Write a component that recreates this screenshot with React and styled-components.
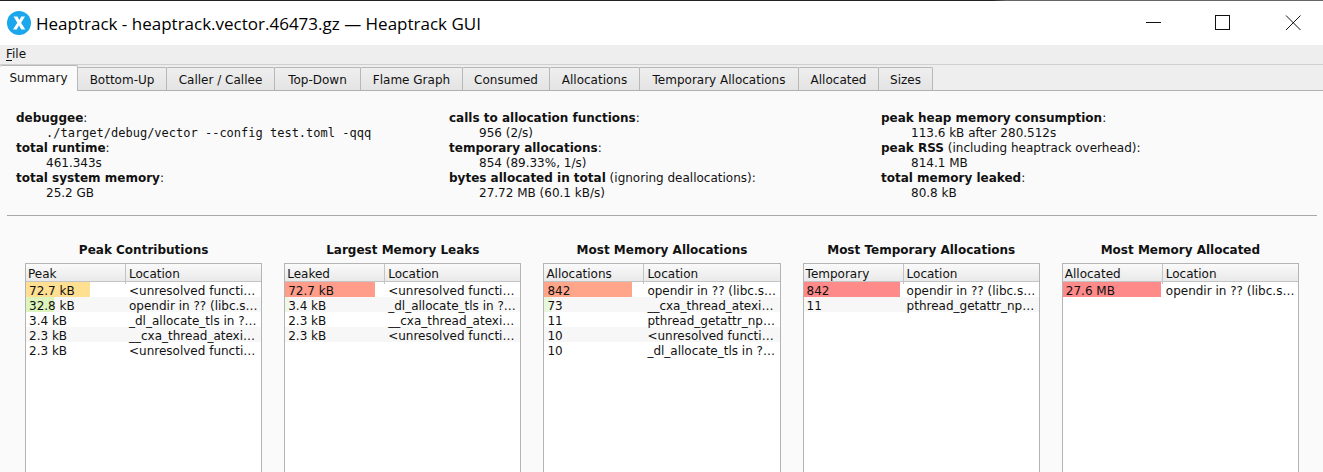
import React from "react";
import styled, { createGlobalStyle } from "styled-components";

const Global = createGlobalStyle`
  html, body { margin: 0; padding: 0; background: #fafafa; }
  body { font-family: "DejaVu Sans", sans-serif; font-size: 12px; color: #111; }
`;
const Win = styled.div`
  width: 1323px; height: 472px; overflow: hidden; display: flex; flex-direction: column;
  border-top: 1px solid #222; border-image: linear-gradient(90deg, #222 75%, #666 76%) 1; box-sizing: border-box; background: #fafafa;
`;
const TitleBar = styled.div`
  height: 44px; flex: none; background: #fff; display: flex; align-items: center; padding-left: 7px;
`;
const TitleText = styled.div`
  font-family: "Open Sans", "Noto Sans", sans-serif; font-size: 17px; color: #000; margin-left: 5px; white-space: nowrap; flex: 1;
`;
const WinButtons = styled.div`display: flex; align-items: center; margin-right: -5px;`;
const WinBtn = styled.div`width: 70px; height: 44px; display: flex; align-items: center; justify-content: center;
  svg { display: block; }
`;
const MenuBar = styled.div`
  height: 19px; flex: none; background: #eeeeee; padding-left: 6px; display: flex; align-items: center; line-height: 21px;
`;
const MenuItem = styled.div`
  u { text-underline-offset: 2px; }
`;
const TabBar = styled.div`
  height: 27px; flex: none; background: #eeeeee; border-top: 1px solid #cfcfcf; border-bottom: 1px solid #b0b0b0; box-sizing: border-box;
  display: flex; align-items: flex-end; position: relative;
`;
const Tab = styled.div`
  width: ${p => p.$w}px; box-sizing: border-box; text-align: center; white-space: nowrap; flex: none;
  height: ${p => p.$active ? 26 : 23}px;
  line-height: ${p => p.$active ? 25 : 24}px;
  background: ${p => p.$active ? "#fafafa" : "linear-gradient(#efefef, #e4e4e4)"};
  border: 1px solid #b8b8b8; border-bottom: none; border-left: ${p => p.$first ? "none" : "1px solid #b8b8b8"};
  margin-left: ${p => p.$first ? 0 : -1}px;
  border-radius: 2px 2px 0 0;
  margin-bottom: ${p => p.$active ? -1 : 0}px;
  position: relative; z-index: ${p => p.$active ? 1 : 0};
`;
const Summary = styled.div`
  display: grid; grid-template-columns: 433px 432px 1fr; padding: 20px 0 0 16px; line-height: 15px; height: 124px; box-sizing: border-box; flex: none;
`;
const InfoCol = styled.div``;
const Label = styled.div`b { font-weight: 700; }`;
const Value = styled.div`
  padding-left: 30px; white-space: nowrap;
  font-family: ${p => p.$mono ? '"DejaVu Sans Mono", monospace' : "inherit"};
`;
const Sep = styled.div`height: 1px; background: #a8a8a8; margin: 0 6px 0 7px; flex: none;`;
const Panels = styled.div`
  display: grid; grid-template-columns: repeat(5, 1fr); gap: 22px; padding: 27px 24px 0 25px; flex: 1; min-height: 0;
`;
const Panel = styled.div`display: flex; flex-direction: column; min-width: 0; height: 300px;`;
const PanelTitle = styled.div`font-weight: 700; text-align: center; line-height: 15px; height: 15px; margin-bottom: 5px; white-space: nowrap;`;
const TableBox = styled.div`border: 1px solid #b4b4b4; background: #fff; flex: 1;`;
const Head = styled.div`
  display: grid; grid-template-columns: 99px 1fr; height: 18px; line-height: 20px;
  background: linear-gradient(#fafafa, #e9e9e9); border-bottom: 1px solid #c4c4c4; box-sizing: border-box;
`;
const HeadCell = styled.div`
  padding-left: ${p => p.$second ? 3 : 2}px; border-left: ${p => p.$second ? "1px solid #c4c4c4" : "none"};
`;
const Row = styled.div`
  display: grid; grid-template-columns: 100px 1fr; height: 15px; line-height: 19px;
  background: ${p => p.$alt ? "#f7f7f7" : "#fff"};
`;
const ValueCell = styled.div`position: relative; padding-left: 3px; white-space: nowrap; height: 15px;`;
const Bar = styled.div`position: absolute; left: 0; top: 0; bottom: 0; background: ${p => p.$c};`;
const CellText = styled.span`position: relative;`;
const LocCell = styled.div`padding-left: 3px; white-space: nowrap; height: 15px;`;

const Logo = () => (
  <svg width="24" height="24" viewBox="0 0 24 24">
    <circle cx="12" cy="12" r="12" fill="#1aa7ec" />
    <path d="M6.5 5.5h4l1.8 3.6 2-3.6h3.7l-3.9 6.2 4.2 6.8h-4l-2.3-4-2.3 4H6l4.3-6.8z" fill="#fff" />
  </svg>
);

const tabs = [
  ["Summary", 78], ["Bottom-Up", 90], ["Caller / Callee", 109], ["Top-Down", 87], ["Flame Graph", 103],
  ["Consumed", 88], ["Allocations", 91], ["Temporary Allocations", 160], ["Allocated", 81], ["Sizes", 55],
];

const panels = [
  { title: "Peak Contributions", head: "Peak", rows: [
    ["72.7 kB", "<unresolved functi…", 64, "#ffdf91"], ["32.8 kB", "opendir in ?? (libc.s…", 28, "#ddf5bc"],
    ["3.4 kB", "_dl_allocate_tls in ?…", 0], ["2.3 kB", "__cxa_thread_atexi…", 0], ["2.3 kB", "<unresolved functi…", 0] ] },
  { title: "Largest Memory Leaks", head: "Leaked", rows: [
    ["72.7 kB", "<unresolved functi…", 90, "#ff9d8a"], ["3.4 kB", "_dl_allocate_tls in ?…", 4, "#eef8e6"],
    ["2.3 kB", "__cxa_thread_atexi…", 0], ["2.3 kB", "<unresolved functi…", 0] ] },
  { title: "Most Memory Allocations", head: "Allocations", rows: [
    ["842", "opendir in ?? (libc.s…", 88, "#ffa58a"], ["73", "__cxa_thread_atexi…", 8, "#e8f7dc"],
    ["11", "pthread_getattr_np…", 1, "#f4fbee"], ["10", "<unresolved functi…", 0], ["10", "_dl_allocate_tls in ?…", 0] ] },
  { title: "Most Temporary Allocations", head: "Temporary", rows: [
    ["842", "opendir in ?? (libc.s…", 96, "#ff8a8a"], ["11", "pthread_getattr_np…", 1, "#f4fbee"] ] },
  { title: "Most Memory Allocated", head: "Allocated", rows: [
    ["27.6 MB", "opendir in ?? (libc.s…", 98, "#ff8a8a"] ] },
];

const info = [
  [["debuggee", ":", "./target/debug/vector --config test.toml -qqq", true], ["total runtime", ":", "461.343s"], ["total system memory", ":", "25.2 GB"]],
  [["calls to allocation functions", ":", "956 (2/s)"], ["temporary allocations", ":", "854 (89.33%, 1/s)"], ["bytes allocated in total", " (ignoring deallocations):", "27.72 MB (60.1 kB/s)"]],
  [["peak heap memory consumption", ":", "113.6 kB after 280.512s"], ["peak RSS", " (including heaptrack overhead):", "814.1 MB"], ["total memory leaked", ":", "80.8 kB"]],
];

export default function App() {
  return (
    <Win>
      <Global />
      <TitleBar>
        <Logo />
        <TitleText>Heaptrack - heaptrack.vector.46473.gz — Heaptrack GUI</TitleText>
        <WinButtons>
          <WinBtn><svg width="16" height="16"><path d="M1 7.5h15" stroke="#111" /></svg></WinBtn>
          <WinBtn><svg width="16" height="16"><rect x="0.5" y="0.5" width="14" height="14" fill="none" stroke="#111" /></svg></WinBtn>
          <WinBtn><svg width="16" height="16"><path d="M1 0.5l14.5 14.5M15.5 0.5L1 15" stroke="#111" fill="none" /></svg></WinBtn>
        </WinButtons>
      </TitleBar>
      <MenuBar><MenuItem><u>F</u>ile</MenuItem></MenuBar>
      <TabBar>
        {tabs.map(([t, w], i) => <Tab key={t} $w={w} $active={i === 0} $first={i === 0}>{t}</Tab>)}
      </TabBar>
      <Summary>
        {info.map((col, i) => (
          <InfoCol key={i}>
            {col.map(([l, s, v, m]) => (
              <React.Fragment key={l}>
                <Label><b>{l}</b>{s}</Label>
                <Value $mono={m}>{v}</Value>
              </React.Fragment>
            ))}
          </InfoCol>
        ))}
      </Summary>
      <Sep />
      <Panels>
        {panels.map(p => (
          <Panel key={p.title}>
            <PanelTitle>{p.title}</PanelTitle>
            <TableBox>
              <Head><HeadCell>{p.head}</HeadCell><HeadCell $second>Location</HeadCell></Head>
              {p.rows.map(([v, l, w, c], i) => (
                <Row key={i} $alt={i % 2 === 1}>
                  <ValueCell>{w > 0 && <Bar $c={c} style={{ width: w }} />}<CellText>{v}</CellText></ValueCell>
                  <LocCell>{l}</LocCell>
                </Row>
              ))}
            </TableBox>
          </Panel>
        ))}
      </Panels>
    </Win>
  );
}
